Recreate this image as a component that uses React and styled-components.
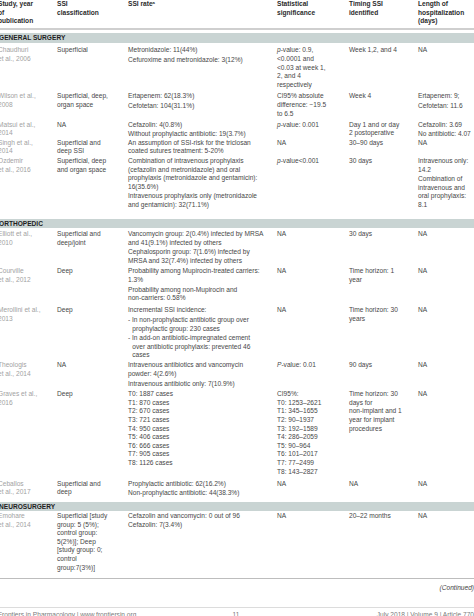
import { Fragment } from "react";
import styled, { createGlobalStyle } from "styled-components";

const GlobalStyle = createGlobalStyle`
  html, body {
    margin: 0;
    padding: 0;
    background: #fff;
  }
  body {
    overflow: hidden;
    font-family: "Liberation Sans", Arial, sans-serif;
  }
`;

const COLS = "59px 71px 149px 72px 69px 1fr";

const Page = styled.div`
  width: 476px;
  margin-left: -2px;
  font-size: 6.6px;
  line-height: 8.6px;
  color: #474747;
`;

const HeadRow = styled.div`
  display: grid;
  grid-template-columns: ${COLS};
  padding-bottom: 2.2px;
  border-bottom: 2px solid #cfcfcf;
  margin-bottom: 3.5px;
  font-weight: bold;
  color: #2b2b2b;
`;

const Sup = styled.sup`
  font-size: 4.2px;
  line-height: 0;
  vertical-align: 2.4px;
`;

const Band = styled.div`
  height: 9.5px;
  line-height: 9.5px;
  padding-left: 1px;
  background: #c9d4d3;
  font-weight: bold;
  color: #1f1f1f;
`;

const Row = styled.div`
  display: grid;
  grid-template-columns: ${COLS};
  padding: ${(p) => p.$pt}px 0 ${(p) => p.$pb}px;
`;

const Cell = styled.div`
  white-space: nowrap;
  color: ${(p) => (p.$cite ? "#a2a2a2" : "inherit")};
`;

const Para = styled.div`
  padding-left: ${(p) => (p.$hang ? 4.3 : 0)}px;
  text-indent: ${(p) => (p.$hang ? -4.3 : 0)}px;
  & + & {
    margin-top: ${(p) => p.$gap}px;
  }
`;

const TableEnd = styled.div`
  border-top: 1.5px solid #bdbdbd;
  padding-top: 5.2px;
`;

const Continued = styled.div`
  text-align: right;
  font-style: italic;
  color: #444;
`;

const Footer = styled.div`
  margin-top: 14.4px;
  border-top: 1px solid #dcdcdc;
  padding-top: 3px;
  display: grid;
  grid-template-columns: 1fr auto 1fr;
  color: #7a7a7a;
`;

const FooterRight = styled.span`
  text-align: right;
`;

const I = styled.i`
  font-style: italic;
`;

const header = [
  ["Study, year", "of", "publication"],
  ["SSI", "classification"],
  [<>SSI rate<Sup>a</Sup></>],
  ["Statistical", "significance"],
  ["Timing SSI", "identified"],
  ["Length of", "hospitalization", "(days)"],
];

// each cell: list of paragraphs, each paragraph a line or a list of lines
const sections = [
  {
    title: "GENERAL SURGERY",
    rows: [
      {
        pt: 3.4, pb: 0,
        cells: [
          [["Chaudhuri", "et al., 2006"]],
          ["Superficial"],
          ["Metronidazole: 11(44%)", "Cefuroxime and metronidazole: 3(12%)"],
          [[<><I>p</I>-value: 0.9,</>, "<0.0001 and", "<0.03 at week 1,", "2, and 4", "respectively"]],
          ["Week 1,2, and 4"],
          ["NA"],
        ],
      },
      {
        pt: 3, pb: 0,
        cells: [
          [["Wilson et al.,", "2008"]],
          [["Superficial, deep,", "organ space"]],
          ["Ertapenem: 62(18.3%)", "Cefotetan: 104(31.1%)"],
          [["CI95% absolute", "difference: \u221219.5", "to 6.5"]],
          ["Week 4"],
          ["Ertapenem: 9;", "Cefotetan: 11.6"],
        ],
      },
      {
        pt: 2.5, pb: 0,
        cells: [
          [["Matsui et al.,", "2014"]],
          ["NA"],
          ["Cefazolin: 4(0.8%)", "Without prophylactic antibiotic: 19(3.7%)"],
          [<><I>p</I>-value: 0.001</>],
          [["Day 1 and or day", "2 postoperative"]],
          ["Cefazolin: 3.69", "No antibiotic: 4.07"],
        ],
      },
      {
        pt: 0, pb: 0,
        cells: [
          [["Singh et al.,", "2014"]],
          [["Superficial and", "deep SSI"]],
          [["An assumption of SSI-risk for the triclosan", "coated sutures treatment: 5-20%"]],
          ["NA"],
          ["30\u201390 days"],
          ["NA"],
        ],
      },
      {
        pt: 1.1, pb: 8.9,
        cells: [
          [["Ozdemir", "et al., 2016"]],
          [["Superficial, deep", "and organ space"]],
          [
            ["Combination of intravenous prophylaxis", "(cefazolin and metronidazole) and oral", "prophylaxis (metronidazole and gentamicin):", "16(35.6%)"],
            ["Intravenous prophylaxis only (metronidazole", "and gentamicin): 32(71.1%)"],
          ],
          [<><I>p</I>-value&lt;0.001</>],
          ["30 days"],
          [["Intravenous only:", "14.2"], ["Combination of", "intravenous and", "oral prophylaxis:", "8.1"]],
        ],
      },
    ],
  },
  {
    title: "ORTHOPEDIC",
    rows: [
      {
        pt: 2, pb: 0,
        cells: [
          [["Elliott et al.,", "2010"]],
          [["Superficial and", "deep/joint"]],
          [
            ["Vancomycin group: 2(0.4%) infected by MRSA", "and 41(9.1%) infected by others"],
            ["Cephalosporin group: 7(1.6%) infected by", "MRSA and 32(7.4%) infected by others"],
          ],
          ["NA"],
          ["30 days"],
          ["NA"],
        ],
      },
      {
        pt: 2, pb: 0,
        cells: [
          [["Courville", "et al., 2012"]],
          ["Deep"],
          [
            ["Probability among Mupirocin-treated carriers:", "1.3%"],
            ["Probability among non-Mupirocin and", "non-carriers: 0.58%"],
          ],
          ["NA"],
          [["Time horizon: 1", "year"]],
          ["NA"],
        ],
      },
      {
        pt: 3.6, pb: 0, gap: 1,
        hang: true,
        cells: [
          [["Merollini et al.,", "2013"]],
          ["Deep"],
          [
            "Incremental SSI incidence:",
            ["- In non-prophylactic antibiotic group over", "prophylactic group: 230 cases"],
            ["- In add-on antibiotic-impregnated cement", "over antibiotic prophylaxis: prevented 46", "cases"],
          ],
          ["NA"],
          [["Time horizon: 30", "years"]],
          ["NA"],
        ],
      },
      {
        pt: 1.4, pb: 0,
        cells: [
          [["Theologis", "et al., 2014"]],
          ["NA"],
          [["Intravenous antibiotics and vancomycin", "powder: 4(2.6%)"], "Intravenous antibiotic only: 7(10.9%)"],
          [<><I>P</I>-value: 0.01</>],
          ["90 days"],
          ["NA"],
        ],
      },
      {
        pt: 2.2, pb: 0,
        cells: [
          [["Graves et al.,", "2016"]],
          ["Deep"],
          [[
            "T0: 1887 cases", "T1: 870 cases", "T2: 670 cases", "T3: 721 cases", "T4: 950 cases",
            "T5: 406 cases", "T6: 666 cases", "T7: 905 cases", "T8: 1126 cases",
          ]],
          [[
            "CI95%:", "T0: 1253\u20132621", "T1: 345\u20131655", "T2: 90\u20131937", "T3: 192\u20131589",
            "T4: 286\u20132059", "T5: 90\u2013964", "T6: 101\u20132017", "T7: 77\u20132499", "T8: 143\u20132827",
          ]],
          [["Time horizon: 30", "days for", "non-implant and 1", "year for implant", "procedures"]],
          ["NA"],
        ],
      },
      {
        pt: 3.3, pb: 4.1,
        cells: [
          [["Ceballos", "et al., 2017"]],
          [["Superficial and", "deep"]],
          ["Prophylactic antibiotic: 62(16.2%)", "Non-prophylactic antibiotic: 44(38.3%)"],
          ["NA"],
          ["NA"],
          ["NA"],
        ],
      },
    ],
  },
  {
    title: "NEUROSURGERY",
    rows: [
      {
        pt: 0.7, pb: 6.1,
        cells: [
          [["Emohare", "et al., 2014"]],
          [["Superficial [study", "group: 5 (5%);", "control group:", "5(2%)]; Deep", "[study group: 0;", "control", "group:7(3%)]"]],
          [["Cefazolin and vancomycin: 0 out of 96", "Cefazolin: 7(3.4%)"]],
          ["NA"],
          ["20\u201322 months"],
          ["NA"],
        ],
      },
    ],
  },
];

const Lines = ({ lines }) => {
  const list = Array.isArray(lines) ? lines : [lines];
  return list.map((line, i) => (
    <Fragment key={i}>
      {i > 0 && <br />}
      {line}
    </Fragment>
  ));
};

const TableRow = ({ row }) => (
  <Row $pt={row.pt} $pb={row.pb}>
    {row.cells.map((paras, c) => (
      <Cell key={c} $cite={c === 0}>
        {paras.map((p, k) => (
          <Para key={k} $gap={row.gap || 0} $hang={row.hang && c === 2 && k > 0}>
            <Lines lines={p} />
          </Para>
        ))}
      </Cell>
    ))}
  </Row>
);

export default function App() {
  return (
    <Page>
      <GlobalStyle />
      <HeadRow>
        {header.map((h, i) => (
          <Cell key={i}>
            <Lines lines={h} />
          </Cell>
        ))}
      </HeadRow>
      {sections.map((s) => (
        <Fragment key={s.title}>
          <Band>{s.title}</Band>
          {s.rows.map((r, i) => (
            <TableRow key={i} row={r} />
          ))}
        </Fragment>
      ))}
      <TableEnd>
        <Continued>(Continued)</Continued>
      </TableEnd>
      <Footer>
        <span>Frontiers in Pharmacology | www.frontiersin.org</span>
        <span>11</span>
        <FooterRight>July 2018 | Volume 9 | Article 770</FooterRight>
      </Footer>
    </Page>
  );
}
